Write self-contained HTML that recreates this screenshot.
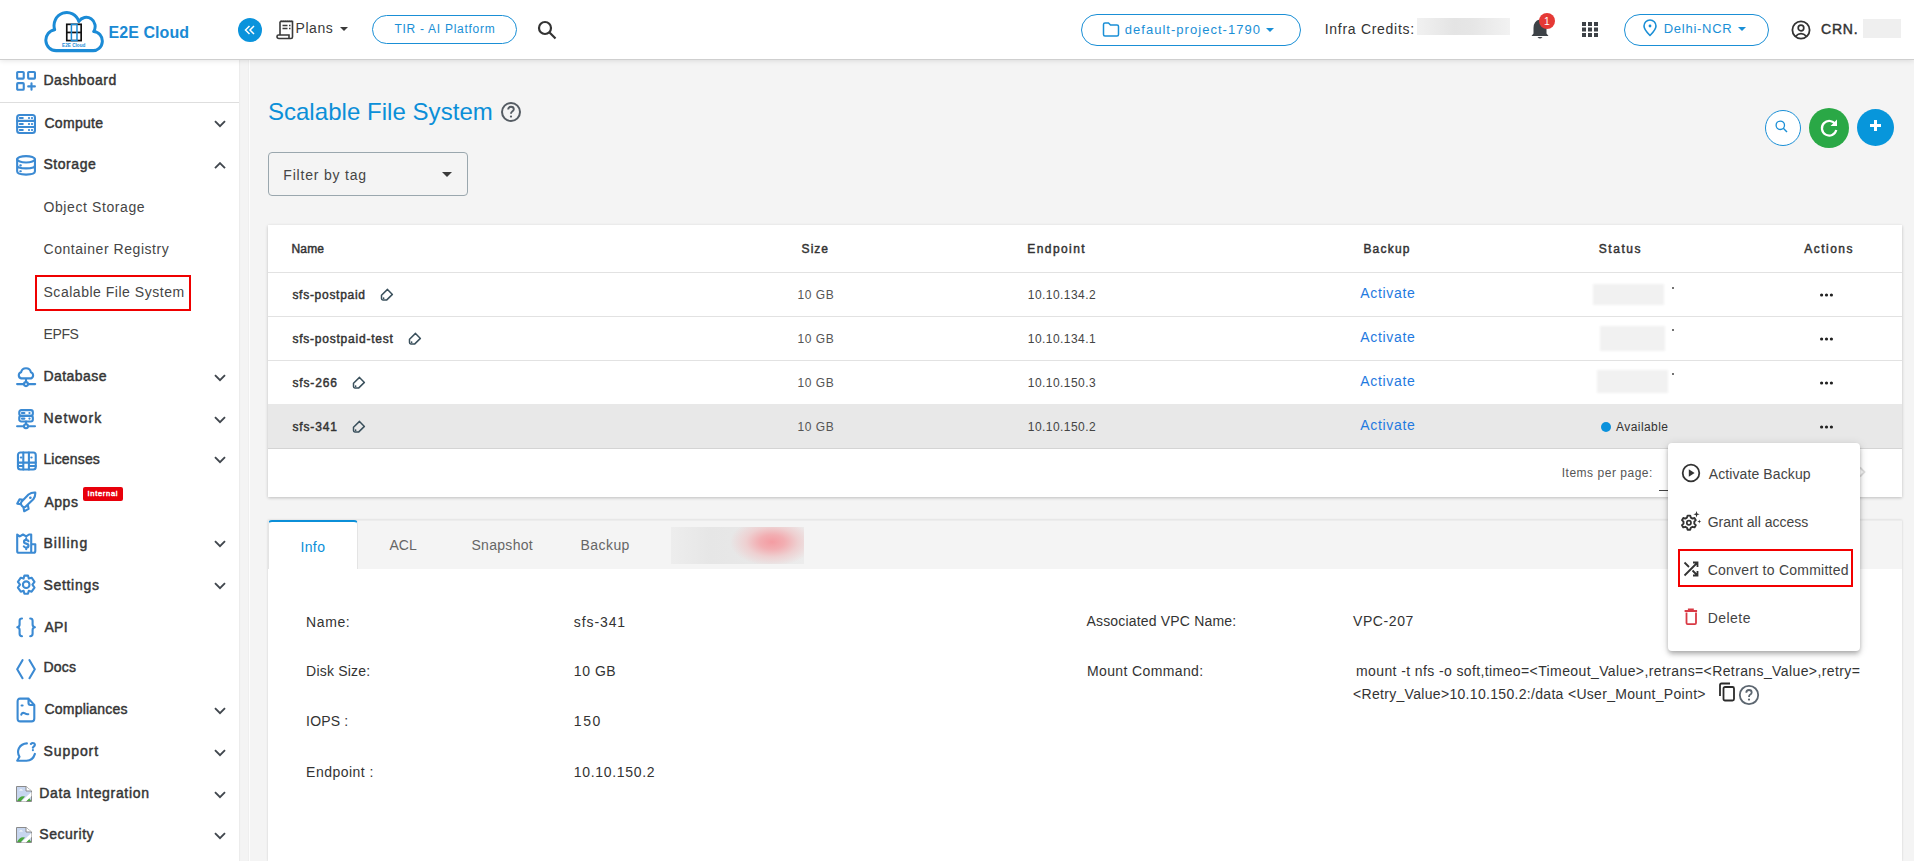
<!DOCTYPE html>
<html><head><meta charset="utf-8"><title>Scalable File System</title>
<style>
html,body{margin:0;padding:0;width:1914px;height:861px;overflow:hidden;background:#f4f4f4;font-family:"Liberation Sans", sans-serif;}
</style></head><body>
<div style="position:absolute;left:0;top:0;width:1914px;height:59px;background:#fff;border-bottom:1px solid #cfcfcf;box-shadow:0 1px 5px rgba(0,0,0,0.10);z-index:5"></div>
<svg style="position:absolute;left:44.3px;top:9.5px;z-index:6" width="60.4" height="43" viewBox="-2 -2 65 45" preserveAspectRatio="none">
<path d="M11 40.5 A11 11 0 0 1 9.5 18.6 A13.5 13.5 0 0 1 35.5 10 A9 9 0 0 1 51.5 20.5 A10 10 0 0 1 50 40.5 Z" fill="none" stroke="#1b8bd6" stroke-width="3.2" stroke-linejoin="round"/>
<rect x="22.5" y="13" width="15.5" height="17" fill="none" stroke="#111" stroke-width="1.8"/>
<line x1="22.5" y1="21.5" x2="38" y2="21.5" stroke="#111" stroke-width="1.8"/>
<rect x="27.5" y="13" width="6" height="17" fill="none" stroke="#1b8bd6" stroke-width="1.6"/>
<text x="30" y="36.5" font-family="Liberation Sans" font-size="5" font-weight="700" fill="#1b8bd6" text-anchor="middle">E2E Cloud</text>
</svg>
<svg style="position:absolute;left:238px;top:18px;z-index:6" width="24" height="24" viewBox="0 0 24 24">
<circle cx="12" cy="12" r="12" fill="#0a93dc"/>
<path d="M11.5 8 L7.5 12 L11.5 16 M16 8 L12 12 L16 16" fill="none" stroke="#fff" stroke-width="1.5"/>
</svg>
<svg style="position:absolute;left:276px;top:20px;z-index:6" width="19" height="20" viewBox="0 0 19 20">
<path d="M4 1.5 L4 15 M4 1.5 L16.5 1.5 L16.5 17 Q16.5 18.5 15 18.5 L3 18.5 Q1 18.5 1 16.5 Q1 15 2.5 15 L13 15 L13 18" fill="none" stroke="#3a3a3a" stroke-width="1.6"/>
<path d="M4.5 1 l1 -0.8 l1 0.8 l1 -0.8 l1 0.8 l1 -0.8 l1 0.8 l1 -0.8 l1 0.8 l1 -0.8 l1 0.8 l1 -0.8 l1 0.8" fill="none" stroke="#3a3a3a" stroke-width="0.9"/>
<path d="M6.5 5.5 H11.5 M6.5 8.5 H11.5 M13 5.5 H14.5 M13 8.5 H14.5" stroke="#3a3a3a" stroke-width="1.4"/>
</svg>
<div style="position:absolute;left:340px;top:27px;width:0;height:0;border-left:4px solid transparent;border-right:4px solid transparent;border-top:4.5px solid #3a3a3a;z-index:6"></div>
<div style="position:absolute;left:372px;top:15px;width:143px;height:27px;border:1px solid #1a8fd6;border-radius:15px;z-index:6"></div>
<svg style="position:absolute;left:536px;top:19px;z-index:6" width="22" height="22" viewBox="0 0 22 22">
<circle cx="9" cy="9" r="6" fill="none" stroke="#333" stroke-width="2.2"/>
<line x1="13.3" y1="13.3" x2="19.5" y2="19.5" stroke="#333" stroke-width="2.2"/>
</svg>
<div style="position:absolute;left:1081px;top:14px;width:218px;height:30px;border:1px solid #1a8fd6;border-radius:16px;z-index:6"></div>
<svg style="position:absolute;left:1102px;top:22px;z-index:6" width="18" height="15" viewBox="0 0 18 15">
<path d="M1.5 2.5 Q1.5 1 3 1 L6.5 1 L8.5 3 L15 3 Q16.5 3 16.5 4.5 L16.5 12.5 Q16.5 14 15 14 L3 14 Q1.5 14 1.5 12.5 Z" fill="none" stroke="#1a8fd6" stroke-width="1.5"/>
</svg>
<div style="position:absolute;left:1266px;top:28px;width:0;height:0;border-left:4px solid transparent;border-right:4px solid transparent;border-top:4px solid #1a8fd6;z-index:6"></div>
<div style="position:absolute;left:1417px;top:18px;width:93px;height:17px;background:linear-gradient(90deg,#f1f1f1,#e4e4e4 40%,#e6e6e6 60%,#f2f2f2);filter:blur(0.6px);z-index:6"></div>
<svg style="position:absolute;left:1529px;top:12px;z-index:6" width="28" height="28" viewBox="0 0 28 28">
<path d="M10.5 7.5 Q4.5 9 4.5 16 L4.5 21.5 L2.5 24 L19.5 24 L17.5 21.5 L17.5 16 Q17.5 9 11.5 7.5 Z" fill="#3d4247"/>
<path d="M8.5 25 Q11 28 13.5 25 Z" fill="#3d4247"/>
<circle cx="18" cy="9" r="8" fill="#e53935"/>
<text x="18" y="12.8" font-family="Liberation Sans" font-size="10.5" fill="#fff" text-anchor="middle">1</text>
</svg>
<svg style="position:absolute;left:1582px;top:22px;z-index:6" width="16" height="15" viewBox="0 0 16 15"><rect x="0" y="0" width="4" height="4" fill="#3d4247"/><rect x="0" y="5.5" width="4" height="4" fill="#3d4247"/><rect x="0" y="11" width="4" height="4" fill="#3d4247"/><rect x="6" y="0" width="4" height="4" fill="#3d4247"/><rect x="6" y="5.5" width="4" height="4" fill="#3d4247"/><rect x="6" y="11" width="4" height="4" fill="#3d4247"/><rect x="12" y="0" width="4" height="4" fill="#3d4247"/><rect x="12" y="5.5" width="4" height="4" fill="#3d4247"/><rect x="12" y="11" width="4" height="4" fill="#3d4247"/></svg>
<div style="position:absolute;left:1624px;top:14px;width:143px;height:30px;border:1px solid #1a8fd6;border-radius:16px;z-index:6"></div>
<svg style="position:absolute;left:1642px;top:19px;z-index:6" width="16" height="18" viewBox="0 0 16 18">
<path d="M8 16.5 Q2 10.5 2 7 A6 6 0 0 1 14 7 Q14 10.5 8 16.5 Z" fill="none" stroke="#1a8fd6" stroke-width="1.6" stroke-linejoin="round"/>
<circle cx="8" cy="7" r="1.4" fill="#1a8fd6"/>
</svg>
<div style="position:absolute;left:1738px;top:27px;width:0;height:0;border-left:4px solid transparent;border-right:4px solid transparent;border-top:4px solid #1a8fd6;z-index:6"></div>
<svg style="position:absolute;left:1791px;top:20px;z-index:6" width="20" height="20" viewBox="0 0 20 20">
<circle cx="10" cy="10" r="8.6" fill="none" stroke="#333" stroke-width="1.8"/>
<circle cx="10" cy="8" r="2.8" fill="none" stroke="#333" stroke-width="1.7"/>
<path d="M4.5 16.3 Q10 11 15.5 16.3" fill="none" stroke="#333" stroke-width="1.7"/>
</svg>
<div style="position:absolute;left:1863px;top:19px;width:38px;height:19px;background:#efefef;filter:blur(0.5px);z-index:6"></div>
<div style="position:absolute;left:0;top:59px;width:239px;height:802px;background:#fff"></div>
<div style="position:absolute;left:239px;top:59px;width:10px;height:802px;background:#f4f4f4;box-shadow:inset 1px 0 1px #ececec, inset -1px 0 1px #efefef"></div>
<div style="position:absolute;left:249px;top:59px;width:1px;height:802px;background:#fdfdfd"></div>
<div style="position:absolute;left:0;top:102px;width:239px;height:1px;background:#dedede"></div>
<svg style="position:absolute;left:214px;top:120px" width="12" height="8" viewBox="0 0 12 8"><path d="M1 1.2 L6 6.2 L11 1.2" fill="none" stroke="#41474e" stroke-width="1.9"/></svg>
<svg style="position:absolute;left:214px;top:162px" width="12" height="8" viewBox="0 0 12 8"><path d="M1 6.2 L6 1.2 L11 6.2" fill="none" stroke="#41474e" stroke-width="1.9"/></svg>
<svg style="position:absolute;left:214px;top:374px" width="12" height="8" viewBox="0 0 12 8"><path d="M1 1.2 L6 6.2 L11 1.2" fill="none" stroke="#41474e" stroke-width="1.9"/></svg>
<svg style="position:absolute;left:214px;top:416px" width="12" height="8" viewBox="0 0 12 8"><path d="M1 1.2 L6 6.2 L11 1.2" fill="none" stroke="#41474e" stroke-width="1.9"/></svg>
<svg style="position:absolute;left:214px;top:456px" width="12" height="8" viewBox="0 0 12 8"><path d="M1 1.2 L6 6.2 L11 1.2" fill="none" stroke="#41474e" stroke-width="1.9"/></svg>
<svg style="position:absolute;left:214px;top:540px" width="12" height="8" viewBox="0 0 12 8"><path d="M1 1.2 L6 6.2 L11 1.2" fill="none" stroke="#41474e" stroke-width="1.9"/></svg>
<svg style="position:absolute;left:214px;top:582px" width="12" height="8" viewBox="0 0 12 8"><path d="M1 1.2 L6 6.2 L11 1.2" fill="none" stroke="#41474e" stroke-width="1.9"/></svg>
<svg style="position:absolute;left:214px;top:707px" width="12" height="8" viewBox="0 0 12 8"><path d="M1 1.2 L6 6.2 L11 1.2" fill="none" stroke="#41474e" stroke-width="1.9"/></svg>
<svg style="position:absolute;left:214px;top:749px" width="12" height="8" viewBox="0 0 12 8"><path d="M1 1.2 L6 6.2 L11 1.2" fill="none" stroke="#41474e" stroke-width="1.9"/></svg>
<svg style="position:absolute;left:214px;top:791px" width="12" height="8" viewBox="0 0 12 8"><path d="M1 1.2 L6 6.2 L11 1.2" fill="none" stroke="#41474e" stroke-width="1.9"/></svg>
<svg style="position:absolute;left:214px;top:832px" width="12" height="8" viewBox="0 0 12 8"><path d="M1 1.2 L6 6.2 L11 1.2" fill="none" stroke="#41474e" stroke-width="1.9"/></svg>
<div style="position:absolute;left:35px;top:275px;width:152px;height:31.5px;border:2px solid #ef0000"></div>
<div style="position:absolute;left:83px;top:487px;width:40px;height:14px;background:#e8000b;border-radius:2px"></div>
<svg style="position:absolute;left:16px;top:70px" width="21" height="22" viewBox="0 0 21 22" fill="none" stroke="#3b8ad3" stroke-width="2.1" stroke-linecap="round" stroke-linejoin="round"><rect x="1.15" y="1.95" width="6.6" height="6.7" rx="0.8"/><rect x="12.15" y="1.95" width="6.8" height="6.7" rx="0.8"/><rect x="1.15" y="13.15" width="6.6" height="6.6" rx="0.8"/><path d="M15.5 13.2 V19.7 M12.2 16.4 H18.9"/></svg>
<svg style="position:absolute;left:16px;top:113px" width="21" height="22" viewBox="0 0 21 22" fill="none" stroke="#3b8ad3" stroke-width="2.1" stroke-linecap="round" stroke-linejoin="round"><rect x="1.15" y="1.95" width="17.8" height="18" rx="2.5"/><path d="M1.15 7.9 H18.95 M1.15 13.95 H18.95"/><path d="M3.8 4.9 H6.8 M12.9 4.9 H13.1 M15.9 4.9 H16.1 M3.8 10.95 H6.8 M12.9 10.95 H13.1 M15.9 10.95 H16.1 M3.8 17 H6.8 M12.9 17 H13.1 M15.9 17 H16.1" stroke-width="2"/></svg>
<svg style="position:absolute;left:16px;top:155px" width="21" height="22" viewBox="0 0 21 22" fill="none" stroke="#3b8ad3" stroke-width="2.1" stroke-linecap="round" stroke-linejoin="round"><ellipse cx="10.05" cy="4.3" rx="8.9" ry="3.2"/><path d="M1.15 4.3 V16.3 Q1.15 19.6 10.05 19.6 Q18.95 19.6 18.95 16.3 V4.3 M1.15 10.2 Q1.15 13.4 10.05 13.4 Q18.95 13.4 18.95 10.2"/><path d="M4.3 10.4 H4.8 M4.3 16.2 H4.8"/></svg>
<svg style="position:absolute;left:16px;top:366px" width="21" height="22" viewBox="0 0 21 22" fill="none" stroke="#3b8ad3" stroke-width="2.1" stroke-linecap="round" stroke-linejoin="round"><path d="M5.3 12.4 A3.2 3.2 0 0 1 5.1 6.2 A5 5 0 0 1 14.9 6.2 A3.3 3.3 0 0 1 15 12.4 Z M10 12.4 V16.1 M1.1 18.1 H7.9 M12.1 18.1 H19.2"/><circle cx="10" cy="18.1" r="2"/></svg>
<svg style="position:absolute;left:16px;top:408px" width="21" height="22" viewBox="0 0 21 22" fill="none" stroke="#3b8ad3" stroke-width="2.1" stroke-linecap="round" stroke-linejoin="round"><rect x="3.25" y="2.15" width="13.6" height="5.7" rx="2"/><rect x="3.25" y="7.85" width="13.6" height="5.6" rx="2"/><path d="M5.9 5 H8.4 M13.4 5 H13.6 M5.9 10.6 H8.4 M13.4 10.6 H13.6 M10 13.5 V16.3 M1.1 18.3 H8 M12 18.3 H19"/><circle cx="10" cy="18.3" r="2"/></svg>
<svg style="position:absolute;left:16px;top:450px" width="21" height="22" viewBox="0 0 21 22" fill="none" stroke="#3b8ad3" stroke-width="2.1" stroke-linecap="round" stroke-linejoin="round"><rect x="1.95" y="2.55" width="17.8" height="16.9" rx="2.5"/><path d="M7.3 2.55 V19.45 M12.9 2.55 V19.45 M1.95 12.6 H19.75 M1.95 16 H7.3 M12.9 16 H19.75"/><path d="M4.8 7.5 H5.3 M15.3 7.5 H15.6"/></svg>
<svg style="position:absolute;left:16px;top:491px" width="21" height="22" viewBox="0 0 21 22" fill="none" stroke="#3b8ad3" stroke-width="2.1" stroke-linecap="round" stroke-linejoin="round"><path d="M6.3 15.3 Q4 13 5.5 10.8 L12.5 3.5 Q15.5 1.2 19.3 1.5 Q19.6 5.3 17.3 8.3 L10 15.3 Q8.3 17.3 6.3 15.3 Z M7.5 8.7 L3.6 8.2 L1.3 12.6 L5 13.3 M11.8 13.7 L12.6 17.9 L8.2 20.2 L7.5 16.6"/><path d="M14.2 6.7 H14.5" stroke-width="2.4"/></svg>
<svg style="position:absolute;left:16px;top:533px" width="21" height="22" viewBox="0 0 21 22" fill="none" stroke="#3b8ad3" stroke-width="2.1" stroke-linecap="round" stroke-linejoin="round"><path d="M1.2 18.2 V1.5 L3.8 3.4 L7 1.5 L10.2 3.4 L13 1.5 L15.2 1.5 V19.8 M1.2 18.2 Q1.2 19.8 3 19.8 H17.5 Q19.3 19.8 19.3 18 V11.3 H15.2 M12.5 8.2 Q11.9 6.9 10.2 6.9 Q8 6.9 8 8.7 Q8 10.3 10.2 10.6 Q12.5 11 12.5 12.8 Q12.5 14.6 10.2 14.6 Q8.4 14.6 7.8 13.4 M10.2 5.3 V6.9 M10.2 14.6 V16.2"/></svg>
<svg style="position:absolute;left:16px;top:574px" width="21" height="22" viewBox="0 0 21 22" fill="none" stroke="#3b8ad3" stroke-width="2.1" stroke-linecap="round" stroke-linejoin="round"><path d="M8.4 1.6 H12 L12.8 4.6 L15.6 3.7 L18.5 7.8 L16.4 10.7 L18.5 13.6 L15.6 17.7 L12.8 16.8 L12 19.8 H8.4 L7.6 16.8 L4.8 17.7 L1.9 13.6 L4 10.7 L1.9 7.8 L4.8 3.7 L7.6 4.6 Z"/><circle cx="10.2" cy="10.7" r="3.3"/></svg>
<svg style="position:absolute;left:16px;top:617px" width="21" height="22" viewBox="0 0 21 22" fill="none" stroke="#3b8ad3" stroke-width="2.1" stroke-linecap="round" stroke-linejoin="round"><path d="M6 1.5 Q3.6 1.5 3.6 3.8 V7.6 Q3.6 10 1.3 10.2 Q3.6 10.6 3.6 13 V16.8 Q3.6 19.2 6 19.2 M14.2 1.5 Q16.6 1.5 16.6 3.8 V7.6 Q16.6 10 18.9 10.2 Q16.6 10.6 16.6 13 V16.8 Q16.6 19.2 14.2 19.2"/></svg>
<svg style="position:absolute;left:16px;top:659px" width="21" height="22" viewBox="0 0 21 22" fill="none" stroke="#3b8ad3" stroke-width="2.1" stroke-linecap="round" stroke-linejoin="round"><path d="M6.5 1.2 L1.2 10.2 L6.5 19.2 M13.5 1.2 L18.8 10.2 L13.5 19.2"/></svg>
<svg style="position:absolute;left:16px;top:697px" width="21" height="27" viewBox="0 0 21 27" fill="none" stroke="#3b8ad3" stroke-width="2.1" stroke-linecap="round" stroke-linejoin="round"><path d="M4 1.6 H12.5 L18.3 8 V21.5 Q18.3 24.4 15.5 24.4 H4.3 Q1.6 24.4 1.6 21.5 V4.5 Q1.6 1.6 4 1.6 Z M12.5 1.6 V6 Q12.5 8 14.5 8 H18.3 M5.6 8.5 H6.6 M5.3 17.7 Q6.2 15.2 8.5 16.2 Q10.5 17.4 12.3 17.2"/></svg>
<svg style="position:absolute;left:16px;top:741px" width="21" height="22" viewBox="0 0 21 22" fill="none" stroke="#3b8ad3" stroke-width="2.1" stroke-linecap="round" stroke-linejoin="round"><path d="M10.9 2.4 Q5.5 2.6 2.9 7.2 Q0.9 11.5 3.5 15.8 L1.2 19.7 H10.5 Q16.9 19.7 18.9 12.9 M14.9 3 Q16.3 1.3 18.3 2.4 Q19.7 3.8 17.6 5.7 L16.9 6.7 M16.9 9.1 V9.3"/></svg>
<svg style="position:absolute;left:16px;top:786px" width="16" height="16" viewBox="0 0 16 16">
<path d="M0.5 0.5 H10 L15.5 5 V15.5 H0.5 Z" fill="#c7d6ef" stroke="#8a8a8a" stroke-width="1"/>
<path d="M1 15 Q4 9 9 10.5 L5 15 Z M10 15 L13 12 L15 14.5 V15 Z" fill="#4aa83e"/>
<path d="M5 15.5 L15.5 6 V10 L10 15.5 Z" fill="#fff"/>
<path d="M3 4.5 Q5 2 7 4.5 Z" fill="#fff"/>
<path d="M10 0.5 V5 H15.5" fill="#fff" stroke="#8a8a8a" stroke-width="1"/>
</svg>
<svg style="position:absolute;left:16px;top:827px" width="16" height="16" viewBox="0 0 16 16">
<path d="M0.5 0.5 H10 L15.5 5 V15.5 H0.5 Z" fill="#c7d6ef" stroke="#8a8a8a" stroke-width="1"/>
<path d="M1 15 Q4 9 9 10.5 L5 15 Z M10 15 L13 12 L15 14.5 V15 Z" fill="#4aa83e"/>
<path d="M5 15.5 L15.5 6 V10 L10 15.5 Z" fill="#fff"/>
<path d="M3 4.5 Q5 2 7 4.5 Z" fill="#fff"/>
<path d="M10 0.5 V5 H15.5" fill="#fff" stroke="#8a8a8a" stroke-width="1"/>
</svg>
<svg style="position:absolute;left:500px;top:101px" width="22" height="22" viewBox="0 0 22 22">
<circle cx="11" cy="11" r="9" fill="none" stroke="#555c63" stroke-width="2"/>
<path d="M8.2 8.6 Q8.2 5.8 11 5.8 Q13.8 5.8 13.8 8.3 Q13.8 9.8 12 10.7 Q11 11.3 11 12.8" fill="none" stroke="#555c63" stroke-width="1.9"/>
<circle cx="11" cy="15.6" r="1.1" fill="#555c63"/>
</svg>
<div style="position:absolute;left:268px;top:152px;width:198px;height:42px;border:1px solid #9aa7ae;border-radius:4px"></div>
<div style="position:absolute;left:442px;top:172px;width:0;height:0;border-left:5px solid transparent;border-right:5px solid transparent;border-top:5px solid #3a3a3a"></div>
<svg style="position:absolute;left:1765px;top:110px" width="36" height="36" viewBox="0 0 36 36">
<circle cx="18" cy="18" r="17.5" fill="#fff" stroke="#1a8fd6" stroke-width="1"/>
<circle cx="15.3" cy="15.3" r="4.2" fill="none" stroke="#1a8fd6" stroke-width="1.3"/>
<line x1="18.3" y1="18.3" x2="22" y2="22" stroke="#1a8fd6" stroke-width="1.4"/>
</svg>
<svg style="position:absolute;left:1809px;top:108px" width="40" height="40" viewBox="0 0 40 40">
<circle cx="20" cy="20" r="20" fill="#2aa846"/>
<path d="M26.5 16.5 A7.3 7.3 0 1 0 27.3 22" fill="none" stroke="#fff" stroke-width="2.2"/>
<path d="M28 11.5 L28 18 L21.5 18 Z" fill="#fff"/>
</svg>
<svg style="position:absolute;left:1857px;top:109px" width="37" height="37" viewBox="0 0 37 37">
<circle cx="18.5" cy="18.5" r="18.5" fill="#0796db"/>
<path d="M18.5 11 V22 M13 16.5 H24" stroke="#fff" stroke-width="3"/>
</svg>
<div style="position:absolute;left:268px;top:225px;width:1634px;height:272px;background:#fff;box-shadow:0 1px 3px rgba(0,0,0,0.22)"></div>
<div style="position:absolute;left:268px;top:272px;width:1634px;height:1px;background:#e2e2e2"></div>
<div style="position:absolute;left:268px;top:316px;width:1634px;height:1px;background:#e2e2e2"></div>
<div style="position:absolute;left:268px;top:360px;width:1634px;height:1px;background:#e2e2e2"></div>
<div style="position:absolute;left:268px;top:448px;width:1634px;height:1px;background:#e2e2e2"></div>
<div style="position:absolute;left:268px;top:404px;width:1634px;height:44px;background:#e8e8e8"></div>
<div style="position:absolute;left:268px;top:448px;width:1634px;height:1px;background:#d4d4d4"></div>
<svg style="position:absolute;left:379px;top:287px" width="16" height="16" viewBox="0 0 16 16">
<path d="M2.5 8.3 L8.5 2.4 L13.4 7.4 L7.8 12.9 H3.8 Q2.5 12.9 2.5 11.6 Z" fill="none" stroke="#3a505c" stroke-width="1.5" stroke-linejoin="round"/>
<circle cx="4.6" cy="11.2" r="0.85" fill="#3a505c"/>
</svg>
<svg style="position:absolute;left:1820px;top:293px" width="13" height="4" viewBox="0 0 13 4"><circle cx="1.6" cy="2" r="1.6" fill="#222"/><circle cx="6.5" cy="2" r="1.6" fill="#222"/><circle cx="11.4" cy="2" r="1.6" fill="#222"/></svg>
<svg style="position:absolute;left:407px;top:331px" width="16" height="16" viewBox="0 0 16 16">
<path d="M2.5 8.3 L8.5 2.4 L13.4 7.4 L7.8 12.9 H3.8 Q2.5 12.9 2.5 11.6 Z" fill="none" stroke="#3a505c" stroke-width="1.5" stroke-linejoin="round"/>
<circle cx="4.6" cy="11.2" r="0.85" fill="#3a505c"/>
</svg>
<svg style="position:absolute;left:1820px;top:337px" width="13" height="4" viewBox="0 0 13 4"><circle cx="1.6" cy="2" r="1.6" fill="#222"/><circle cx="6.5" cy="2" r="1.6" fill="#222"/><circle cx="11.4" cy="2" r="1.6" fill="#222"/></svg>
<svg style="position:absolute;left:351px;top:375px" width="16" height="16" viewBox="0 0 16 16">
<path d="M2.5 8.3 L8.5 2.4 L13.4 7.4 L7.8 12.9 H3.8 Q2.5 12.9 2.5 11.6 Z" fill="none" stroke="#3a505c" stroke-width="1.5" stroke-linejoin="round"/>
<circle cx="4.6" cy="11.2" r="0.85" fill="#3a505c"/>
</svg>
<svg style="position:absolute;left:1820px;top:381px" width="13" height="4" viewBox="0 0 13 4"><circle cx="1.6" cy="2" r="1.6" fill="#222"/><circle cx="6.5" cy="2" r="1.6" fill="#222"/><circle cx="11.4" cy="2" r="1.6" fill="#222"/></svg>
<svg style="position:absolute;left:351px;top:419px" width="16" height="16" viewBox="0 0 16 16">
<path d="M2.5 8.3 L8.5 2.4 L13.4 7.4 L7.8 12.9 H3.8 Q2.5 12.9 2.5 11.6 Z" fill="none" stroke="#3a505c" stroke-width="1.5" stroke-linejoin="round"/>
<circle cx="4.6" cy="11.2" r="0.85" fill="#3a505c"/>
</svg>
<svg style="position:absolute;left:1820px;top:425px" width="13" height="4" viewBox="0 0 13 4"><circle cx="1.6" cy="2" r="1.6" fill="#222"/><circle cx="6.5" cy="2" r="1.6" fill="#222"/><circle cx="11.4" cy="2" r="1.6" fill="#222"/></svg>
<div style="position:absolute;left:1593px;top:284px;width:71px;height:21px;background:#f1f1f1;filter:blur(1px)"></div>
<div style="position:absolute;left:1672px;top:287px;width:2px;height:2px;background:#444;border-radius:1px"></div>
<div style="position:absolute;left:1600px;top:326px;width:65px;height:25px;background:#f1f1f1;filter:blur(1px)"></div>
<div style="position:absolute;left:1672px;top:329px;width:2px;height:2px;background:#444;border-radius:1px"></div>
<div style="position:absolute;left:1597px;top:370px;width:71px;height:23px;background:#f1f1f1;filter:blur(1px)"></div>
<div style="position:absolute;left:1672px;top:373px;width:2px;height:2px;background:#444;border-radius:1px"></div>
<div style="position:absolute;left:1601px;top:422px;width:10px;height:10px;border-radius:5px;background:#0a91dc"></div>
<div style="position:absolute;left:1659px;top:490px;width:12px;height:1px;background:#444"></div>
<svg style="position:absolute;left:1858px;top:466px" width="8" height="12" viewBox="0 0 8 12"><path d="M2 1.5 L6.5 6 L2 10.5" fill="none" stroke="#ddd" stroke-width="1.8"/></svg>
<div style="position:absolute;left:268px;top:520px;width:1634px;height:341px;background:#fff;box-shadow:0 0 2px rgba(0,0,0,0.16)"></div>
<div style="position:absolute;left:268px;top:520px;width:1634px;height:48px;background:#f4f4f4;border-top:1px solid #ececec"></div>
<div style="position:absolute;left:268px;top:520px;width:90px;height:49px;background:#fff;border-left:1px solid #e4e4e4;border-right:1px solid #e4e4e4;border-top:2px solid #0b8fd8;border-radius:4px 4px 0 0;box-sizing:border-box"></div>
<div style="position:absolute;left:671px;top:527px;width:133px;height:37px;background:radial-gradient(ellipse 42px 24px at 101px 15px, #f49ca2 0%, #f2aeb2 30%, #eed0d1 62%, rgba(232,232,232,0) 100%), linear-gradient(90deg,#ededed 0%,#e6e6e6 30%,#e8e8e8 60%,#ececec 100%)"></div>
<svg style="position:absolute;left:1718px;top:682px" width="19" height="20" viewBox="0 0 19 20">
<path d="M2 14 V3 Q2 1.5 3.5 1.5 H12" fill="none" stroke="#2b2b2b" stroke-width="1.8"/>
<rect x="5.5" y="5" width="10.5" height="13.5" rx="1.5" fill="none" stroke="#2b2b2b" stroke-width="1.8"/>
</svg>
<svg style="position:absolute;left:1738px;top:684px" width="22" height="22" viewBox="0 0 22 22">
<circle cx="11" cy="11" r="9.2" fill="none" stroke="#5c6670" stroke-width="1.8"/>
<path d="M8.3 8.8 Q8.3 6 11 6 Q13.7 6 13.7 8.5 Q13.7 10 12 10.8 Q11 11.4 11 12.9" fill="none" stroke="#5c6670" stroke-width="1.8"/>
<circle cx="11" cy="15.6" r="1.1" fill="#5c6670"/>
</svg>
<div style="position:absolute;left:1668px;top:443px;width:192px;height:208px;background:#fff;border-radius:4px;box-shadow:0 2px 4px -1px rgba(0,0,0,.2),0 4px 5px 0 rgba(0,0,0,.14),0 1px 10px 0 rgba(0,0,0,.12);z-index:10"></div>
<svg style="position:absolute;left:1681px;top:463px;z-index:11;" width="20" height="20" viewBox="0 0 20 20">
<circle cx="10" cy="10" r="8.3" fill="none" stroke="#333" stroke-width="1.8"/>
<path d="M7.8 6.3 L13.6 10 L7.8 13.7 Z" fill="#333"/>
</svg>
<svg style="position:absolute;left:1680px;top:510px;z-index:11;" width="22" height="22" viewBox="0 0 22 22">
<path d="M7.6 5.6 H10.2 L10.8 7.6 L12.5 8.6 L14.5 8 L15.8 10.2 L14.3 11.7 V13.7 L15.8 15.2 L14.5 17.4 L12.5 16.8 L10.8 17.8 L10.2 19.8 H7.6 L7 17.8 L5.3 16.8 L3.3 17.4 L2 15.2 L3.5 13.7 V11.7 L2 10.2 L3.3 8 L5.3 8.6 L7 7.6 Z" fill="none" stroke="#333" stroke-width="1.9" stroke-linejoin="round"/>
<circle cx="8.9" cy="12.7" r="2.1" fill="none" stroke="#333" stroke-width="1.7"/>
<path d="M16.5 1 L17.3 3.4 L19.7 4.2 L17.3 5 L16.5 7.4 L15.7 5 L13.3 4.2 L15.7 3.4 Z M19.3 9.5 L19.8 11 L21.3 11.5 L19.8 12 L19.3 13.5 L18.8 12 L17.3 11.5 L18.8 11 Z" fill="#333"/>
</svg>
<div style="position:absolute;left:1678px;top:549px;width:171px;height:34px;border:2px solid #f20000;z-index:11;"></div>
<svg style="position:absolute;left:1683px;top:561px;z-index:11;" width="17" height="16" viewBox="0 0 17 16">
<path d="M1.5 1.5 L6 6 M9.5 9.5 L14.5 14.5 M1.5 14.5 L14.5 1.5 M10 1.5 H14.5 V6 M14.5 10 V14.5 H10" fill="none" stroke="#333" stroke-width="1.8"/>
</svg>
<svg style="position:absolute;left:1683px;top:608px;z-index:11;" width="16" height="18" viewBox="0 0 16 18">
<path d="M1.6 3 H14.1 M5.8 2.6 V1.4 H9.9 V2.6 M3.5 4.6 V15 Q3.5 16.1 4.6 16.1 H11.9 Q13 16.1 13 15 V4.6" fill="none" stroke="#d93a45" stroke-width="1.8"/>
</svg>
<div style="position:absolute;left:108.50px;top:24.66px;font-size:16px;line-height:16px;font-weight:700;color:#1a8ad4;white-space:nowrap;letter-spacing:0.062px;z-index:6;">E2E Cloud</div>
<div style="position:absolute;left:295.60px;top:20.95px;font-size:14px;line-height:14px;font-weight:400;color:#3a3a3a;white-space:nowrap;letter-spacing:0.525px;z-index:6;">Plans</div>
<div style="position:absolute;left:394.40px;top:22.84px;font-size:12px;line-height:12px;font-weight:400;color:#1a8fd6;white-space:nowrap;letter-spacing:0.725px;z-index:6;">TIR - AI Platform</div>
<div style="position:absolute;left:1124.80px;top:23.00px;font-size:13px;line-height:13px;font-weight:400;color:#1a8fd6;white-space:nowrap;letter-spacing:1.026px;z-index:6;">default-project-1790</div>
<div style="position:absolute;left:1324.70px;top:22.15px;font-size:14px;line-height:14px;font-weight:400;color:#333;white-space:nowrap;letter-spacing:0.715px;z-index:6;">Infra Credits:</div>
<div style="position:absolute;left:1663.70px;top:22.40px;font-size:13px;line-height:13px;font-weight:400;color:#1a8fd6;white-space:nowrap;letter-spacing:0.738px;z-index:6;">Delhi-NCR</div>
<div style="position:absolute;left:1821.00px;top:22.15px;font-size:14px;line-height:14px;font-weight:400;color:#333;white-space:nowrap;letter-spacing:0.800px;-webkit-text-stroke:0.45px #333;z-index:6;">CRN.</div>
<div style="position:absolute;left:43.40px;top:73.35px;font-size:14px;line-height:14px;font-weight:400;color:#353535;white-space:nowrap;letter-spacing:0.562px;-webkit-text-stroke:0.45px #353535;">Dashboard</div>
<div style="position:absolute;left:44.40px;top:115.55px;font-size:14px;line-height:14px;font-weight:400;color:#353535;white-space:nowrap;letter-spacing:0.317px;-webkit-text-stroke:0.45px #353535;">Compute</div>
<div style="position:absolute;left:43.40px;top:157.45px;font-size:14px;line-height:14px;font-weight:400;color:#353535;white-space:nowrap;letter-spacing:0.567px;-webkit-text-stroke:0.45px #353535;">Storage</div>
<div style="position:absolute;left:43.40px;top:369.35px;font-size:14px;line-height:14px;font-weight:400;color:#353535;white-space:nowrap;letter-spacing:0.471px;-webkit-text-stroke:0.45px #353535;">Database</div>
<div style="position:absolute;left:43.40px;top:411.15px;font-size:14px;line-height:14px;font-weight:400;color:#353535;white-space:nowrap;letter-spacing:1.083px;-webkit-text-stroke:0.45px #353535;">Network</div>
<div style="position:absolute;left:43.40px;top:452.15px;font-size:14px;line-height:14px;font-weight:400;color:#353535;white-space:nowrap;letter-spacing:0.171px;-webkit-text-stroke:0.45px #353535;">Licenses</div>
<div style="position:absolute;left:44.40px;top:494.75px;font-size:14px;line-height:14px;font-weight:400;color:#353535;white-space:nowrap;letter-spacing:0.533px;-webkit-text-stroke:0.45px #353535;">Apps</div>
<div style="position:absolute;left:43.40px;top:535.65px;font-size:14px;line-height:14px;font-weight:400;color:#353535;white-space:nowrap;letter-spacing:1.083px;-webkit-text-stroke:0.45px #353535;">Billing</div>
<div style="position:absolute;left:43.40px;top:577.75px;font-size:14px;line-height:14px;font-weight:400;color:#353535;white-space:nowrap;letter-spacing:0.700px;-webkit-text-stroke:0.45px #353535;">Settings</div>
<div style="position:absolute;left:44.40px;top:619.55px;font-size:14px;line-height:14px;font-weight:400;color:#353535;white-space:nowrap;letter-spacing:0.350px;-webkit-text-stroke:0.45px #353535;">API</div>
<div style="position:absolute;left:43.40px;top:660.35px;font-size:14px;line-height:14px;font-weight:400;color:#353535;white-space:nowrap;letter-spacing:0.233px;-webkit-text-stroke:0.45px #353535;">Docs</div>
<div style="position:absolute;left:44.40px;top:702.45px;font-size:14px;line-height:14px;font-weight:400;color:#353535;white-space:nowrap;letter-spacing:0.230px;-webkit-text-stroke:0.45px #353535;">Compliances</div>
<div style="position:absolute;left:43.40px;top:744.45px;font-size:14px;line-height:14px;font-weight:400;color:#353535;white-space:nowrap;letter-spacing:0.950px;-webkit-text-stroke:0.45px #353535;">Support</div>
<div style="position:absolute;left:39.30px;top:786.25px;font-size:14px;line-height:14px;font-weight:400;color:#353535;white-space:nowrap;letter-spacing:0.667px;-webkit-text-stroke:0.45px #353535;">Data Integration</div>
<div style="position:absolute;left:39.30px;top:827.25px;font-size:14px;line-height:14px;font-weight:400;color:#353535;white-space:nowrap;letter-spacing:0.529px;-webkit-text-stroke:0.45px #353535;">Security</div>
<div style="position:absolute;left:43.50px;top:200.35px;font-size:14px;line-height:14px;font-weight:400;color:#454545;white-space:nowrap;letter-spacing:0.592px;">Object Storage</div>
<div style="position:absolute;left:43.50px;top:242.15px;font-size:14px;line-height:14px;font-weight:400;color:#454545;white-space:nowrap;letter-spacing:0.547px;">Container Registry</div>
<div style="position:absolute;left:43.50px;top:284.85px;font-size:14px;line-height:14px;font-weight:400;color:#454545;white-space:nowrap;letter-spacing:0.521px;">Scalable File System</div>
<div style="position:absolute;left:43.50px;top:327.05px;font-size:14px;line-height:14px;font-weight:400;color:#454545;white-space:nowrap;letter-spacing:-0.400px;">EPFS</div>
<div style="position:absolute;left:87.50px;top:489.85px;font-size:7.5px;line-height:7.5px;font-weight:400;color:#fff;white-space:nowrap;letter-spacing:0.714px;-webkit-text-stroke:0.45px #fff;">Internal</div>
<div style="position:absolute;left:267.90px;top:99.78px;font-size:24px;line-height:24px;font-weight:400;color:#0b8fd8;white-space:nowrap;letter-spacing:0.042px;">Scalable File System</div>
<div style="position:absolute;left:283.30px;top:168.25px;font-size:14px;line-height:14px;font-weight:400;color:#454545;white-space:nowrap;letter-spacing:0.808px;">Filter by tag</div>
<div style="position:absolute;left:291.40px;top:242.84px;font-size:12px;line-height:12px;font-weight:400;color:#333;white-space:nowrap;letter-spacing:0.200px;-webkit-text-stroke:0.45px #333;">Name</div>
<div style="position:absolute;left:801.60px;top:242.84px;font-size:12px;line-height:12px;font-weight:400;color:#333;white-space:nowrap;letter-spacing:1.033px;-webkit-text-stroke:0.45px #333;">Size</div>
<div style="position:absolute;left:1027.30px;top:242.84px;font-size:12px;line-height:12px;font-weight:400;color:#333;white-space:nowrap;letter-spacing:1.414px;-webkit-text-stroke:0.45px #333;">Endpoint</div>
<div style="position:absolute;left:1363.40px;top:242.84px;font-size:12px;line-height:12px;font-weight:400;color:#333;white-space:nowrap;letter-spacing:1.220px;-webkit-text-stroke:0.45px #333;">Backup</div>
<div style="position:absolute;left:1598.70px;top:242.84px;font-size:12px;line-height:12px;font-weight:400;color:#333;white-space:nowrap;letter-spacing:1.560px;-webkit-text-stroke:0.45px #333;">Status</div>
<div style="position:absolute;left:1804.20px;top:242.84px;font-size:12px;line-height:12px;font-weight:400;color:#333;white-space:nowrap;letter-spacing:1.500px;-webkit-text-stroke:0.45px #333;">Actions</div>
<div style="position:absolute;left:292.40px;top:288.84px;font-size:12px;line-height:12px;font-weight:400;color:#333;white-space:nowrap;letter-spacing:0.718px;-webkit-text-stroke:0.45px #333;">sfs-postpaid</div>
<div style="position:absolute;left:797.40px;top:288.84px;font-size:12px;line-height:12px;font-weight:400;color:#555;white-space:nowrap;letter-spacing:0.575px;">10 GB</div>
<div style="position:absolute;left:1027.80px;top:288.84px;font-size:12px;line-height:12px;font-weight:400;color:#444;white-space:nowrap;letter-spacing:0.440px;">10.10.134.2</div>
<div style="position:absolute;left:1360.20px;top:286.15px;font-size:14px;line-height:14px;font-weight:400;color:#1f7ae0;white-space:nowrap;letter-spacing:0.700px;">Activate</div>
<div style="position:absolute;left:292.40px;top:332.84px;font-size:12px;line-height:12px;font-weight:400;color:#333;white-space:nowrap;letter-spacing:0.775px;-webkit-text-stroke:0.45px #333;">sfs-postpaid-test</div>
<div style="position:absolute;left:797.40px;top:332.84px;font-size:12px;line-height:12px;font-weight:400;color:#555;white-space:nowrap;letter-spacing:0.575px;">10 GB</div>
<div style="position:absolute;left:1027.80px;top:332.84px;font-size:12px;line-height:12px;font-weight:400;color:#444;white-space:nowrap;letter-spacing:0.440px;">10.10.134.1</div>
<div style="position:absolute;left:1360.20px;top:330.15px;font-size:14px;line-height:14px;font-weight:400;color:#1f7ae0;white-space:nowrap;letter-spacing:0.700px;">Activate</div>
<div style="position:absolute;left:292.40px;top:376.84px;font-size:12px;line-height:12px;font-weight:400;color:#333;white-space:nowrap;letter-spacing:0.867px;-webkit-text-stroke:0.45px #333;">sfs-266</div>
<div style="position:absolute;left:797.40px;top:376.84px;font-size:12px;line-height:12px;font-weight:400;color:#555;white-space:nowrap;letter-spacing:0.575px;">10 GB</div>
<div style="position:absolute;left:1027.80px;top:376.84px;font-size:12px;line-height:12px;font-weight:400;color:#444;white-space:nowrap;letter-spacing:0.440px;">10.10.150.3</div>
<div style="position:absolute;left:1360.20px;top:374.15px;font-size:14px;line-height:14px;font-weight:400;color:#1f7ae0;white-space:nowrap;letter-spacing:0.700px;">Activate</div>
<div style="position:absolute;left:292.40px;top:420.84px;font-size:12px;line-height:12px;font-weight:400;color:#333;white-space:nowrap;letter-spacing:0.867px;-webkit-text-stroke:0.45px #333;">sfs-341</div>
<div style="position:absolute;left:797.40px;top:420.84px;font-size:12px;line-height:12px;font-weight:400;color:#555;white-space:nowrap;letter-spacing:0.575px;">10 GB</div>
<div style="position:absolute;left:1027.80px;top:420.84px;font-size:12px;line-height:12px;font-weight:400;color:#444;white-space:nowrap;letter-spacing:0.440px;">10.10.150.2</div>
<div style="position:absolute;left:1360.20px;top:418.15px;font-size:14px;line-height:14px;font-weight:400;color:#1f7ae0;white-space:nowrap;letter-spacing:0.700px;">Activate</div>
<div style="position:absolute;left:1616.00px;top:420.84px;font-size:12px;line-height:12px;font-weight:400;color:#333;white-space:nowrap;letter-spacing:0.438px;">Available</div>
<div style="position:absolute;left:1561.70px;top:466.84px;font-size:12px;line-height:12px;font-weight:400;color:#555;white-space:nowrap;letter-spacing:0.521px;">Items per page:</div>
<div style="position:absolute;left:300.40px;top:539.85px;font-size:14px;line-height:14px;font-weight:400;color:#0b8fd8;white-space:nowrap;letter-spacing:0.400px;">Info</div>
<div style="position:absolute;left:389.40px;top:537.85px;font-size:14px;line-height:14px;font-weight:400;color:#666;white-space:nowrap;letter-spacing:0.050px;">ACL</div>
<div style="position:absolute;left:471.40px;top:538.15px;font-size:14px;line-height:14px;font-weight:400;color:#666;white-space:nowrap;letter-spacing:0.314px;">Snapshot</div>
<div style="position:absolute;left:580.50px;top:538.15px;font-size:14px;line-height:14px;font-weight:400;color:#666;white-space:nowrap;letter-spacing:0.440px;">Backup</div>
<div style="position:absolute;left:306.10px;top:614.65px;font-size:14px;line-height:14px;font-weight:400;color:#333;white-space:nowrap;letter-spacing:0.575px;">Name:</div>
<div style="position:absolute;left:573.80px;top:614.65px;font-size:14px;line-height:14px;font-weight:400;color:#333;white-space:nowrap;letter-spacing:0.900px;">sfs-341</div>
<div style="position:absolute;left:306.10px;top:664.25px;font-size:14px;line-height:14px;font-weight:400;color:#333;white-space:nowrap;letter-spacing:0.200px;">Disk Size:</div>
<div style="position:absolute;left:573.80px;top:664.25px;font-size:14px;line-height:14px;font-weight:400;color:#333;white-space:nowrap;letter-spacing:0.550px;">10 GB</div>
<div style="position:absolute;left:306.10px;top:714.35px;font-size:14px;line-height:14px;font-weight:400;color:#333;white-space:nowrap;letter-spacing:0.160px;">IOPS :</div>
<div style="position:absolute;left:573.80px;top:714.35px;font-size:14px;line-height:14px;font-weight:400;color:#333;white-space:nowrap;letter-spacing:1.600px;">150</div>
<div style="position:absolute;left:306.10px;top:764.65px;font-size:14px;line-height:14px;font-weight:400;color:#333;white-space:nowrap;letter-spacing:0.467px;">Endpoint :</div>
<div style="position:absolute;left:573.80px;top:764.65px;font-size:14px;line-height:14px;font-weight:400;color:#333;white-space:nowrap;letter-spacing:0.680px;">10.10.150.2</div>
<div style="position:absolute;left:1086.50px;top:613.85px;font-size:14px;line-height:14px;font-weight:400;color:#333;white-space:nowrap;letter-spacing:0.179px;">Associated VPC Name:</div>
<div style="position:absolute;left:1353.00px;top:613.85px;font-size:14px;line-height:14px;font-weight:400;color:#333;white-space:nowrap;letter-spacing:0.583px;">VPC-207</div>
<div style="position:absolute;left:1087.00px;top:663.75px;font-size:14px;line-height:14px;font-weight:400;color:#333;white-space:nowrap;letter-spacing:0.377px;">Mount Command:</div>
<div style="position:absolute;left:1356.00px;top:663.75px;font-size:14px;line-height:14px;font-weight:400;color:#333;white-space:nowrap;letter-spacing:0.392px;">mount -t nfs -o soft,timeo=&lt;Timeout_Value&gt;,retrans=&lt;Retrans_Value&gt;,retry=</div>
<div style="position:absolute;left:1353.00px;top:686.65px;font-size:14px;line-height:14px;font-weight:400;color:#333;white-space:nowrap;letter-spacing:0.312px;">&lt;Retry_Value&gt;10.10.150.2:/data &lt;User_Mount_Point&gt;</div>
<div style="position:absolute;left:1708.70px;top:467.15px;font-size:14px;line-height:14px;font-weight:400;color:#444;white-space:nowrap;letter-spacing:0.107px;z-index:11;">Activate Backup</div>
<div style="position:absolute;left:1707.70px;top:514.85px;font-size:14px;line-height:14px;font-weight:400;color:#444;white-space:nowrap;letter-spacing:0.020px;z-index:11;">Grant all access</div>
<div style="position:absolute;left:1707.70px;top:563.05px;font-size:14px;line-height:14px;font-weight:400;color:#444;white-space:nowrap;letter-spacing:0.247px;z-index:11;">Convert to Committed</div>
<div style="position:absolute;left:1707.70px;top:611.15px;font-size:14px;line-height:14px;font-weight:400;color:#444;white-space:nowrap;letter-spacing:0.460px;z-index:11;">Delete</div>
</body></html>
